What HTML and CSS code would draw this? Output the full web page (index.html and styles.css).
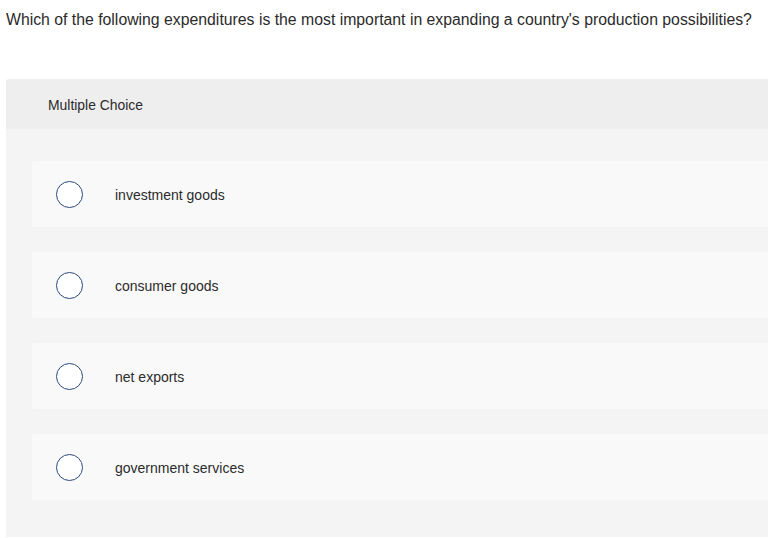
FILE: index.html
```html
<!DOCTYPE html>
<html>
<head>
<meta charset="utf-8">
<link rel="stylesheet" href="styles.css">
</head>
<body>
<p class="question">Which of the following expenditures is the most important in expanding a country's production possibilities?</p>
<section class="panel">
  <div class="panel-head">Multiple Choice</div>
  <div class="panel-body">
    <div class="option"><span class="radio"></span><span class="label">investment goods</span></div>
    <div class="option"><span class="radio"></span><span class="label">consumer goods</span></div>
    <div class="option"><span class="radio"></span><span class="label">net exports</span></div>
    <div class="option"><span class="radio"></span><span class="label">government services</span></div>
  </div>
</section>
</body>
</html>
```
FILE: styles.css
```css
html, body {
  margin: 0;
  padding: 0;
  background: #ffffff;
  font-family: "Liberation Sans", Arial, sans-serif;
  color: #2b2b2b;
}
.question {
  margin: 0;
  padding: 10px 0 0 6px;
  font-size: 15.8px;
  line-height: 20px;
  height: 20px;
  white-space: nowrap;
}
.panel {
  margin: 49px 0 0 6px;
  border-top-left-radius: 3px;
  overflow: hidden;
}
.panel-head {
  background: #eeeeee;
  height: 50px;
  display: flex;
  align-items: center;
  padding-left: 42px;
  padding-top: 1px;
  box-sizing: border-box;
  font-size: 13.9px;
}
.panel-body {
  background: #f4f4f4;
  padding: 32px 0 37px 26px;
  display: flex;
  flex-direction: column;
  gap: 25px;
}
.option {
  background: #f9f9f9;
  height: 66px;
  display: flex;
  align-items: center;
  border-top-left-radius: 3px;
  border-bottom-left-radius: 3px;
}
.radio {
  width: 25px;
  height: 25px;
  border: 1.3px solid #2c4a7e;
  border-radius: 50%;
  background: #ffffff;
  margin-left: 24px;
  flex: none;
}
.label {
  margin-left: 32px;
  padding-top: 2px;
  font-size: 14px;
}
```
